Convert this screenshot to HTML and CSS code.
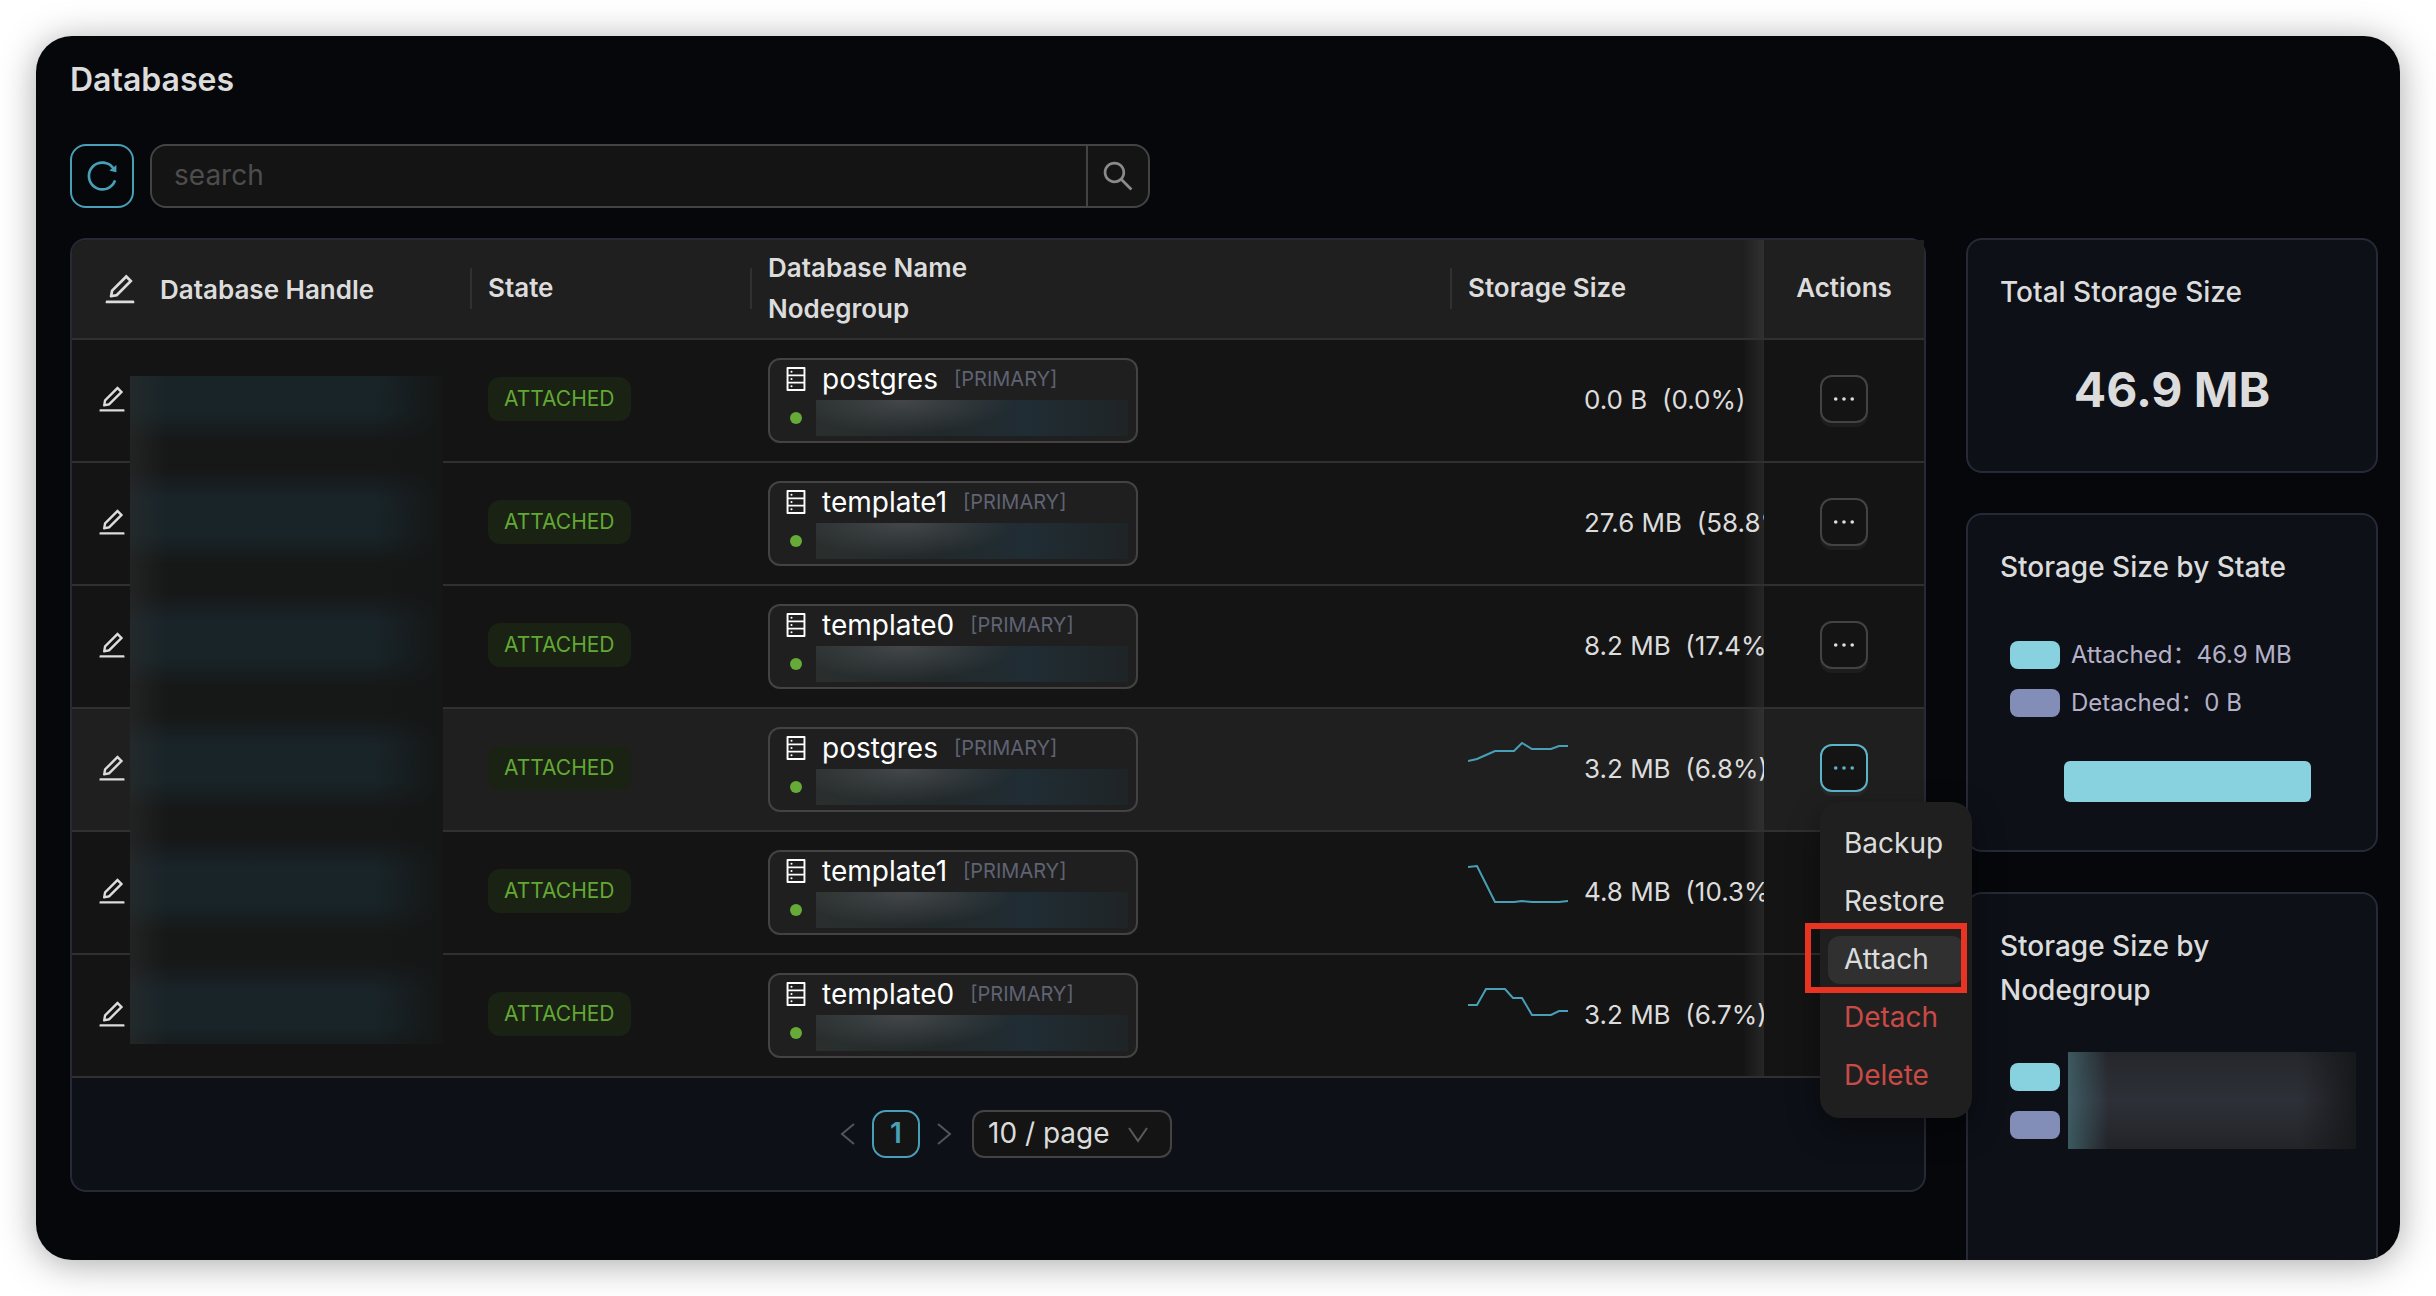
FILE: index.html
```html
<!DOCTYPE html>
<html lang="en">
<head>
  <meta charset="UTF-8">
  <meta name="viewport" content="width=device-width, initial-scale=1">
  <title>Databases</title>
  <link rel="stylesheet" href="styles.css">
</head>
<body>
  <svg class="sprite" aria-hidden="true">
    <symbol id="icon-reload" viewBox="0 0 1024 1024"><path d="M909.1 209.3l-56.4 44.1C775.8 155.1 656.2 92 521.9 92 290 92 102.3 279.5 102 511.5 101.7 743.7 289.8 932 521.9 932c181.3 0 335.8-115 394.6-276.1 1.5-4.2-.7-8.9-4.9-10.3l-56.7-19.5a8 8 0 00-10.1 4.8c-1.8 5-3.8 10-5.9 14.9-17.3 41-42.1 77.8-73.7 109.4A344.77 344.77 0 01655.9 829c-42.3 17.9-87.4 27-133.8 27-46.5 0-91.5-9.1-133.8-27A341.5 341.5 0 01279 755.2a342.16 342.16 0 01-73.7-109.4c-17.9-42.4-27-87.4-27-133.9s9.1-91.5 27-133.9c17.3-41 42.1-77.8 73.7-109.4 31.6-31.6 68.4-56.4 109.3-73.8 42.3-17.9 87.4-27 133.8-27 46.5 0 91.5 9.1 133.8 27a341.5 341.5 0 01109.3 73.8c9.9 9.9 19.2 20.4 27.8 31.4l-60.2 47a8 8 0 003 14.1l175.6 43c5 1.2 9.9-2.6 9.9-7.7l.8-180.9c-.1-6.6-7.8-10.3-13-6.2z"/></symbol>
    <symbol id="icon-search" viewBox="64 64 896 896"><path d="M909.6 854.5L649.9 594.8C690.2 542.7 712 479 712 412c0-80.2-31.3-155.4-87.9-212.1-56.6-56.7-132-87.9-212.1-87.9s-155.5 31.3-212.1 87.9C143.2 256.5 112 331.8 112 412c0 80.1 31.3 155.5 87.9 212.1C256.5 680.8 331.8 712 412 712c67 0 130.6-21.8 182.7-62l259.7 259.6a8.2 8.2 0 0011.6 0l43.6-43.5a8.2 8.2 0 000-11.6zM570.4 570.4C528 612.7 471.8 636 412 636s-116-23.3-158.4-65.6C211.3 528 188 471.8 188 412s23.3-116.1 65.6-158.4C296 211.3 352.2 188 412 188s116.1 23.2 158.4 65.6S636 352.2 636 412s-23.3 116.1-65.6 158.4z"/></symbol>
    <symbol id="icon-edit" viewBox="64 64 896 896"><path d="M257.7 752c2 0 4-.2 6-.5L431.9 722c2-.4 3.9-1.3 5.3-2.8l423.9-423.9a9.96 9.96 0 000-14.1L694.9 114.9c-1.9-1.9-4.4-2.9-7.1-2.9s-5.2 1-7.1 2.9L256.8 538.8c-1.5 1.5-2.4 3.3-2.8 5.3l-29.5 168.2a33.5 33.5 0 009.4 29.8c6.6 6.4 14.9 9.9 23.8 9.9zm67.4-174.4L687.8 215l73.3 73.3-362.7 362.6-88.9 15.7 15.6-89zM880 836H144c-17.7 0-32 14.3-32 32v36c0 4.4 3.6 8 8 8h784c4.4 0 8-3.6 8-8v-36c0-17.7-14.3-32-32-32z"/></symbol>
    <symbol id="icon-db" viewBox="64 64 896 896"><path d="M832 64H192c-17.7 0-32 14.3-32 32v832c0 17.7 14.3 32 32 32h640c17.7 0 32-14.3 32-32V96c0-17.7-14.3-32-32-32zm-600 72h560v208H232V136zm560 480H232V408h560v208zm0 272H232V680h560v208zM304 240a40 40 0 1080 0 40 40 0 10-80 0zm0 272a40 40 0 1080 0 40 40 0 10-80 0zm0 272a40 40 0 1080 0 40 40 0 10-80 0z"/></symbol>
    <symbol id="icon-more" viewBox="0 0 24 24"><circle cx="3" cy="12" r="2"/><circle cx="12" cy="12" r="2"/><circle cx="21" cy="12" r="2"/></symbol>
  </svg>

  <div class="window">
    <h1>Databases</h1>

    <div class="toolbar">
      <button class="reload-btn" aria-label="Reload"><svg><use href="#icon-reload"/></svg></button>
      <div class="search">
        <input type="text" placeholder="search" aria-label="Search databases">
        <button class="search-btn" aria-label="Search"><svg><use href="#icon-search"/></svg></button>
      </div>
    </div>

    <div class="content">
      <main class="table-card">
        <div class="table-wrap">
          <table>
            <colgroup>
              <col class="col-handle">
              <col class="col-state">
              <col>
              <col class="col-size">
              <col class="col-actions">
            </colgroup>
            <thead>
              <tr>
                <th><div class="handle-head"><svg><use href="#icon-edit"/></svg>Database Handle</div></th>
                <th>State</th>
                <th>Database Name<br>Nodegroup</th>
                <th class="size">Storage Size</th>
                <th class="actions">Actions</th>
              </tr>
            </thead>
            <tbody>
              <tr>
                <td><button class="edit-btn" aria-label="Edit"><svg><use href="#icon-edit"/></svg></button></td>
                <td><span class="tag">ATTACHED</span></td>
                <td class="name">
                  <div class="node">
                    <div class="node-name"><svg><use href="#icon-db"/></svg>postgres<small>[PRIMARY]</small></div>
                    <div class="node-group"><i class="dot"></i><span class="redacted"></span></div>
                  </div>
                </td>
                <td class="size"><div class="size-row"><svg class="spark" viewBox="0 0 100 56"></svg><span>0.0 B&nbsp; (0.0%)</span></div></td>
                <td class="actions"><button class="more-btn" aria-label="Actions"><svg><use href="#icon-more"/></svg></button></td>
              </tr>
              <tr>
                <td><button class="edit-btn" aria-label="Edit"><svg><use href="#icon-edit"/></svg></button></td>
                <td><span class="tag">ATTACHED</span></td>
                <td class="name">
                  <div class="node">
                    <div class="node-name"><svg><use href="#icon-db"/></svg>template1<small>[PRIMARY]</small></div>
                    <div class="node-group"><i class="dot"></i><span class="redacted"></span></div>
                  </div>
                </td>
                <td class="size"><div class="size-row"><svg class="spark" viewBox="0 0 100 56"></svg><span>27.6 MB&nbsp; (58.8%)</span></div></td>
                <td class="actions"><button class="more-btn" aria-label="Actions"><svg><use href="#icon-more"/></svg></button></td>
              </tr>
              <tr>
                <td><button class="edit-btn" aria-label="Edit"><svg><use href="#icon-edit"/></svg></button></td>
                <td><span class="tag">ATTACHED</span></td>
                <td class="name">
                  <div class="node">
                    <div class="node-name"><svg><use href="#icon-db"/></svg>template0<small>[PRIMARY]</small></div>
                    <div class="node-group"><i class="dot"></i><span class="redacted"></span></div>
                  </div>
                </td>
                <td class="size"><div class="size-row"><svg class="spark" viewBox="0 0 100 56"></svg><span>8.2 MB&nbsp; (17.4%)</span></div></td>
                <td class="actions"><button class="more-btn" aria-label="Actions"><svg><use href="#icon-more"/></svg></button></td>
              </tr>
              <tr class="active">
                <td><button class="edit-btn" aria-label="Edit"><svg><use href="#icon-edit"/></svg></button></td>
                <td><span class="tag">ATTACHED</span></td>
                <td class="name">
                  <div class="node">
                    <div class="node-name"><svg><use href="#icon-db"/></svg>postgres<small>[PRIMARY]</small></div>
                    <div class="node-group"><i class="dot"></i><span class="redacted"></span></div>
                  </div>
                </td>
                <td class="size"><div class="size-row"><svg class="spark" viewBox="0 0 100 56"><polyline points="0,21 9,19 18,15 27,11 46,11 54,3 64,9 83,9 91,6 100,6"/></svg><span>3.2 MB&nbsp; (6.8%)</span></div></td>
                <td class="actions">
                  <button class="more-btn" aria-label="Actions" aria-expanded="true"><svg><use href="#icon-more"/></svg></button>
                  <div class="menu" role="menu">
                    <button role="menuitem">Backup</button>
                    <button role="menuitem">Restore</button>
                    <button role="menuitem" class="current">Attach</button>
                    <button role="menuitem" class="danger">Detach</button>
                    <button role="menuitem" class="danger">Delete</button>
                  </div>
                </td>
              </tr>
              <tr>
                <td><button class="edit-btn" aria-label="Edit"><svg><use href="#icon-edit"/></svg></button></td>
                <td><span class="tag">ATTACHED</span></td>
                <td class="name">
                  <div class="node">
                    <div class="node-name"><svg><use href="#icon-db"/></svg>template1<small>[PRIMARY]</small></div>
                    <div class="node-group"><i class="dot"></i><span class="redacted"></span></div>
                  </div>
                </td>
                <td class="size"><div class="size-row"><svg class="spark" viewBox="0 0 100 56"><polyline points="0,4 9,3 27,39 46,39 54,38 64,39 91,39 100,38"/></svg><span>4.8 MB&nbsp; (10.3%)</span></div></td>
                <td class="actions"><button class="more-btn" aria-label="Actions"><svg><use href="#icon-more"/></svg></button></td>
              </tr>
              <tr>
                <td><button class="edit-btn" aria-label="Edit"><svg><use href="#icon-edit"/></svg></button></td>
                <td><span class="tag">ATTACHED</span></td>
                <td class="name">
                  <div class="node">
                    <div class="node-name"><svg><use href="#icon-db"/></svg>template0<small>[PRIMARY]</small></div>
                    <div class="node-group"><i class="dot"></i><span class="redacted"></span></div>
                  </div>
                </td>
                <td class="size"><div class="size-row"><svg class="spark" viewBox="0 0 100 56"><polyline points="0,19 9,19 18,3 37,3 45,12 54,12 64,29 83,29 91,25 100,25"/></svg><span>3.2 MB&nbsp; (6.7%)</span></div></td>
                <td class="actions"><button class="more-btn" aria-label="Actions"><svg><use href="#icon-more"/></svg></button></td>
              </tr>
            </tbody>
          </table>
          <div class="handle-mask"></div>
        </div>

        <nav class="pagination" aria-label="Pagination">
          <button class="arrow" aria-label="Previous page"><svg viewBox="0 0 16 24"><polyline points="14,2 2,12 14,22"/></svg></button>
          <button class="page">1</button>
          <button class="arrow" aria-label="Next page"><svg viewBox="0 0 16 24"><polyline points="2,2 14,12 2,22"/></svg></button>
          <div class="page-size">
            <select aria-label="Page size">
              <option>10 / page</option>
              <option>20 / page</option>
              <option>50 / page</option>
            </select>
            <svg viewBox="0 0 20 16"><polyline points="1,1 10,14 19,1"/></svg>
          </div>
        </nav>
      </main>

      <aside>
        <section class="stat">
          <h2>Total Storage Size</h2>
          <p class="total">46.9 MB</p>
        </section>
        <section class="stat">
          <h2>Storage Size by State</h2>
          <ul class="legend">
            <li><i class="swatch"></i><span>Attached：46.9 MB</span></li>
            <li><i class="swatch purple"></i><span>Detached：0 B</span></li>
          </ul>
          <div class="bar"></div>
        </section>
        <section class="stat last">
          <h2>Storage Size by Nodegroup</h2>
          <div class="group-legend">
            <ul class="legend">
              <li><i class="swatch"></i></li>
              <li><i class="swatch purple"></i></li>
            </ul>
            <div class="legend-mask"></div>
          </div>
        </section>
      </aside>
    </div>
  </div>
</body>
</html>
```
FILE: styles.css
```css
* { box-sizing: border-box; margin: 0; padding: 0; }
body {
  height: 100vh;
  padding: 36px;
  background: #fff;
  font-family: Inter, "Noto Sans CJK SC", sans-serif;
  font-size: 26px;
  color: #dcdcdc;
  overflow: hidden;
}
button, input, select { font: inherit; color: inherit; }
button { cursor: pointer; background: none; border: none; }
svg { fill: currentColor; display: block; flex: none; }
ul { list-style: none; }
.sprite { position: absolute; width: 0; height: 0; }

.window {
  height: 100%;
  padding: 22px 22px 0 34px;
  background: #05070b;
  border-radius: 36px;
  box-shadow: 0 4px 36px rgba(0, 0, 0, 0.34);
  overflow: hidden;
}
h1 { font-size: 32px; font-weight: 600; line-height: 44px; }

/* toolbar */
.toolbar { display: flex; gap: 16px; margin: 42px 0 30px; }
.reload-btn {
  width: 64px;
  height: 64px;
  display: flex;
  align-items: center;
  justify-content: center;
  border: 2px solid #47a0b8;
  border-radius: 16px;
  color: #47a0b8;
}
.reload-btn svg { width: 36px; height: 36px; }
.search {
  display: flex;
  width: 1000px;
  height: 64px;
  background: #141414;
  border: 2px solid #434343;
  border-radius: 16px;
}
.search input {
  flex: 1;
  padding: 0 22px 2px;
  font-size: 28px;
  background: none;
  border: none;
  outline: none;
}
.search input::placeholder { color: #4d4d4d; }
.search-btn {
  width: 62px;
  display: flex;
  align-items: center;
  justify-content: center;
  border-left: 2px solid #434343;
  color: #8a8a8a;
}
.search-btn svg { width: 32px; height: 32px; }

.content { display: flex; align-items: flex-start; gap: 40px; }

/* table */
.table-card {
  flex: 1;
  min-width: 0;
  background: #0d1017;
  border: 2px solid #252a36;
  border-radius: 16px;
}
.table-wrap { position: relative; }
table {
  width: 100%;
  table-layout: fixed;
  border-collapse: separate;
  border-spacing: 0;
}
.col-handle { width: 400px; }
.col-state { width: 280px; }
.col-size { width: 312px; }
.col-actions { width: 160px; }
th, td {
  position: relative;
  padding: 0 16px 3px;
  border-bottom: 2px solid #303030;
  text-align: left;
}
th { height: 100px; background: #1f1f1f; font-weight: 600; line-height: 41px; }
th:first-child { padding-bottom: 0; border-top-left-radius: 14px; }
th:nth-child(-n+3)::after {
  content: "";
  position: absolute;
  right: 0;
  top: 28px;
  width: 2px;
  height: 41px;
  background: #303030;
}
td { height: 123px; background: #141414; }
td.name { padding-bottom: 0; }
tr.active td { background: #1f1f1f; }
.handle-head { display: flex; align-items: center; gap: 24px; padding-left: 16px; }
.handle-head svg { width: 32px; height: 32px; }
.edit-btn { display: block; margin-left: 10px; }
.edit-btn svg { width: 28px; height: 28px; }
td.size { overflow: hidden; }
.size::before {
  content: "";
  position: absolute;
  top: 0;
  right: 0;
  bottom: 0;
  width: 22px;
  background: linear-gradient(to right, transparent, rgba(255, 255, 255, 0.08));
}
.actions { text-align: center; }

.tag {
  display: inline-block;
  padding: 0 16px;
  font-size: 21px;
  line-height: 44px;
  color: #62a833;
  background: #192213;
  border-radius: 12px;
}

.node {
  width: 370px;
  height: 85px;
  padding: 0 8px 0 14px;
  background: #1f1f1f;
  border: 2px solid #434343;
  border-radius: 12px;
}
.node-name {
  display: flex;
  align-items: center;
  height: 38px;
  font-size: 28px;
  color: #fff;
}
.node-name svg { width: 24px; height: 24px; margin-right: 14px; }
.node-name small { margin-left: 16px; font-size: 20px; color: #5f6373; }
.node-group { display: flex; align-items: center; gap: 14px; height: 40px; padding-left: 6px; }
.dot { width: 12px; height: 12px; border-radius: 50%; background: #66aa37; }
.redacted {
  flex: 1;
  height: 36px;
  background:
    radial-gradient(ellipse 110px 34px at 28% 0, #43474a, transparent),
    linear-gradient(to right, #2a2f2e, #22292b 40%, #202d34 68%, #1f2426);
}
.handle-mask {
  position: absolute;
  left: 58px;
  top: 136px;
  bottom: 34px;
  width: 313px;
  background:
    linear-gradient(to right, rgba(46, 46, 46, 0.5), transparent 12%, transparent 78%, #151616),
    repeating-linear-gradient(#192429 0, #182428 36px, #161717 66px, #161717 92px, #192429 123px);
}

.size-row { display: flex; align-items: center; gap: 16px; white-space: nowrap; }
.spark { width: 100px; height: 56px; fill: none; stroke: #47a0b8; stroke-width: 2; }

.more-btn {
  width: 48px;
  height: 48px;
  display: inline-flex;
  align-items: center;
  justify-content: center;
  vertical-align: middle;
  background: #141414;
  border: 2px solid #434343;
  border-radius: 12px;
  box-shadow: 0 4px 0 rgba(255, 255, 255, 0.04);
}
.more-btn svg { width: 22px; height: 22px; }
.active .more-btn { color: #5bb5c9; border-color: #5bb5c9; }

/* row menu */
.menu {
  position: absolute;
  top: 93px;
  left: 56px;
  z-index: 2;
  width: 152px;
  padding: 18px 8px;
  display: flex;
  flex-direction: column;
  gap: 10px;
  background: #1f1f1f;
  border-radius: 20px;
  box-shadow: 0 12px 32px rgba(0, 0, 0, 0.4);
}
.menu button {
  position: relative;
  padding: 0 16px 2px;
  font-size: 28px;
  line-height: 46px;
  text-align: left;
  border-radius: 12px;
}
.menu .current { background: #303030; }
.menu .current::after {
  content: "";
  position: absolute;
  inset: -13px -3px -9px -23px;
  border: 6px solid #e93323;
}
.menu .danger { color: #c94a47; }

/* pagination */
.pagination {
  display: flex;
  align-items: center;
  justify-content: center;
  height: 112px;
  font-size: 28px;
}
.arrow { width: 48px; height: 48px; display: flex; align-items: center; justify-content: center; color: #555; }
.arrow svg { width: 16px; height: 24px; }
.pagination polyline { fill: none; stroke: currentColor; stroke-width: 2; }
.page {
  width: 48px;
  height: 48px;
  padding-bottom: 2px;
  font-weight: 600;
  color: #47a0b8;
  background: #141414;
  border: 2px solid #47a0b8;
  border-radius: 14px;
}
.page-size { position: relative; margin-left: 4px; }
.page-size select {
  width: 200px;
  height: 48px;
  padding: 0 14px 2px;
  appearance: none;
  background: #141414;
  border: 2px solid #434343;
  border-radius: 12px;
}
.page-size svg {
  position: absolute;
  right: 24px;
  top: 17px;
  width: 20px;
  height: 16px;
  color: #5a5a5a;
  pointer-events: none;
}

/* side cards */
aside { flex: none; width: 412px; display: flex; flex-direction: column; gap: 40px; }
.stat {
  padding: 30px 32px;
  background: #0d1017;
  border: 2px solid #252a36;
  border-radius: 16px;
}
.stat h2 { font-size: 28px; font-weight: 500; line-height: 44px; }
.total {
  margin: 52px 0 27px;
  font-size: 48px;
  font-weight: 700;
  line-height: 48px;
  text-align: center;
}
.legend {
  display: flex;
  flex-direction: column;
  gap: 20px;
  margin: 52px 0 0 10px;
  font-size: 24px;
  color: #b5b1c8;
}
.legend li { display: flex; align-items: center; gap: 11px; height: 28px; }
.legend span { padding-bottom: 6px; }
.swatch { width: 50px; height: 28px; border-radius: 8px; background: #88d1de; }
.swatch.purple { background: #828db8; }
.bar { width: 247px; height: 41px; margin: 44px 0 18px 64px; border-radius: 6px; background: #88d1de; }
.last { height: 420px; }
.group-legend { display: flex; align-items: center; gap: 8px; margin: 40px -12px 0 0; }
.group-legend .legend { margin-top: 0; }
.legend-mask {
  flex: 1;
  height: 97px;
  background:
    linear-gradient(to right, rgba(70, 110, 118, 0.7), transparent 14%, transparent 80%, #17181a),
    linear-gradient(#25272b, #2e3039 50%, #222428);
}
```
